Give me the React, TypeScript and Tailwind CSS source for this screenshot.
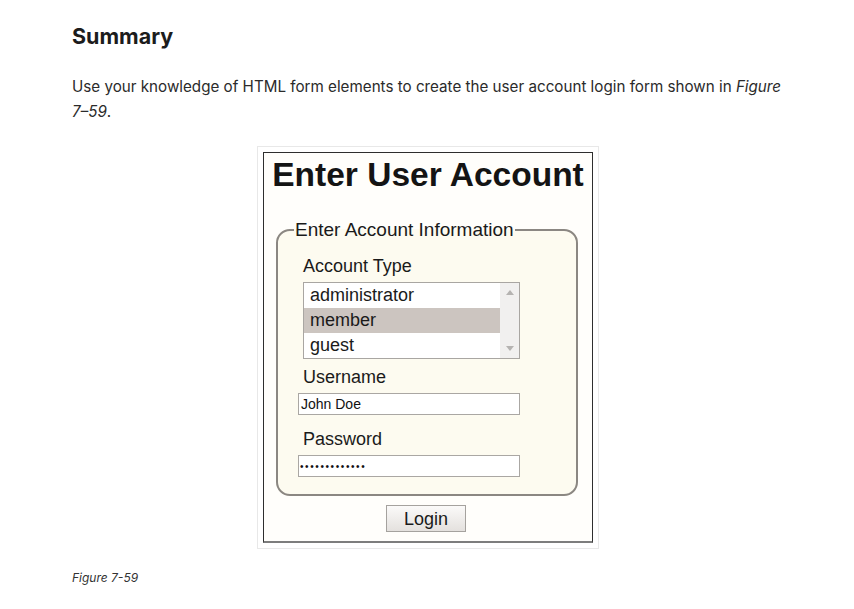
export default function App() {
  return (
    <div className="min-h-screen bg-white px-[72px] pt-[22px] font-['Inter',sans-serif] text-[#2b2b2b]">
      {/* Section heading */}
      <h2 className="text-[21.5px] font-bold leading-[28px] text-[#1c1c1c]">Summary</h2>

      <p className="mt-[24px] text-[15.2px] leading-[25px]">
        Use your knowledge of HTML form elements to create the user account login form shown in{' '}
        <em>Figure</em> <em>7–59</em>.
      </p>

      {/* Figure */}
      <div className="mt-[22px] flex justify-center pl-[2px]">
        <div className="border border-[#e8e8e8] bg-white p-[5px]">
          <div className="flex w-[330px] flex-col border-[1.5px] border-b-2 border-[#2e2e2e] border-b-[#7d7d7d] bg-[#fffefb] font-['Liberation_Sans',Arial,sans-serif] text-[#1a1a1a]">
            <h1 className="mt-[2px] text-center text-[33.5px] font-bold leading-[40px] text-[#141414]">
              Enter User Account
            </h1>

            <fieldset className="mt-[24px] ml-[12px] mr-[14px] rounded-[14px] border-2 border-[#8b8782] bg-[#fdfbf0] pb-[17px] pl-[20px] pr-[55px]">
              <legend className="ml-[-4px] px-[1px] text-[19px] leading-[22px] text-[#1a1a1a]">
                Enter Account Information
              </legend>

              <div className="mt-[14px] ml-[5px] text-[18px] leading-[22px]">Account Type</div>
              <div className="mt-[5px] ml-[5px] flex w-[217px] border border-[#a9a6a2] bg-white">
                <div className="flex-1 text-[18px] leading-[25px]">
                  <div className="pl-[6px]">administrator</div>
                  <div className="bg-[#ccc5c0] pl-[6px]">member</div>
                  <div className="pl-[6px]">guest</div>
                </div>
                <div className="flex w-[19px] flex-col items-center justify-between bg-[#f1f0ef] py-[7px]">
                  <svg width="8" height="5" viewBox="0 0 8 5">
                    <path d="M0 5 L4 0 L8 5 Z" fill="#b5b3b1" />
                  </svg>
                  <svg width="8" height="5" viewBox="0 0 8 5">
                    <path d="M0 0 L4 5 L8 0 Z" fill="#b5b3b1" />
                  </svg>
                </div>
              </div>

              <div className="mt-[7px] ml-[5px] text-[18px] leading-[22px]">Username</div>
              <div className="mt-[5px] flex h-[22px] w-[222px] items-center border border-[#aaa7a3] bg-white pl-[2px] text-[14px] text-[#111]">
                John Doe
              </div>

              <div className="mt-[13px] ml-[5px] text-[18px] leading-[22px]">Password</div>
              <div className="mt-[5px] flex h-[22px] w-[222px] items-center border border-[#aaa7a3] bg-white pl-[1px] text-[10px] tracking-[1.6px] text-[#111]">
                •••••••••••••
              </div>
            </fieldset>

            <div className="mt-[9px] mb-[9px] flex justify-center pr-[4px]">
              <button className="h-[27px] w-[80px] border border-[#a5a29e] bg-gradient-to-b from-[#fbfaf9] to-[#e4e1de] text-[18px] leading-[24px] text-[#1a1a1a]">
                Login
              </button>
            </div>
          </div>
        </div>
      </div>

      <div className="mt-[21px] text-[12px] italic leading-[16px] text-[#333]">Figure 7-59</div>
    </div>
  );
}
